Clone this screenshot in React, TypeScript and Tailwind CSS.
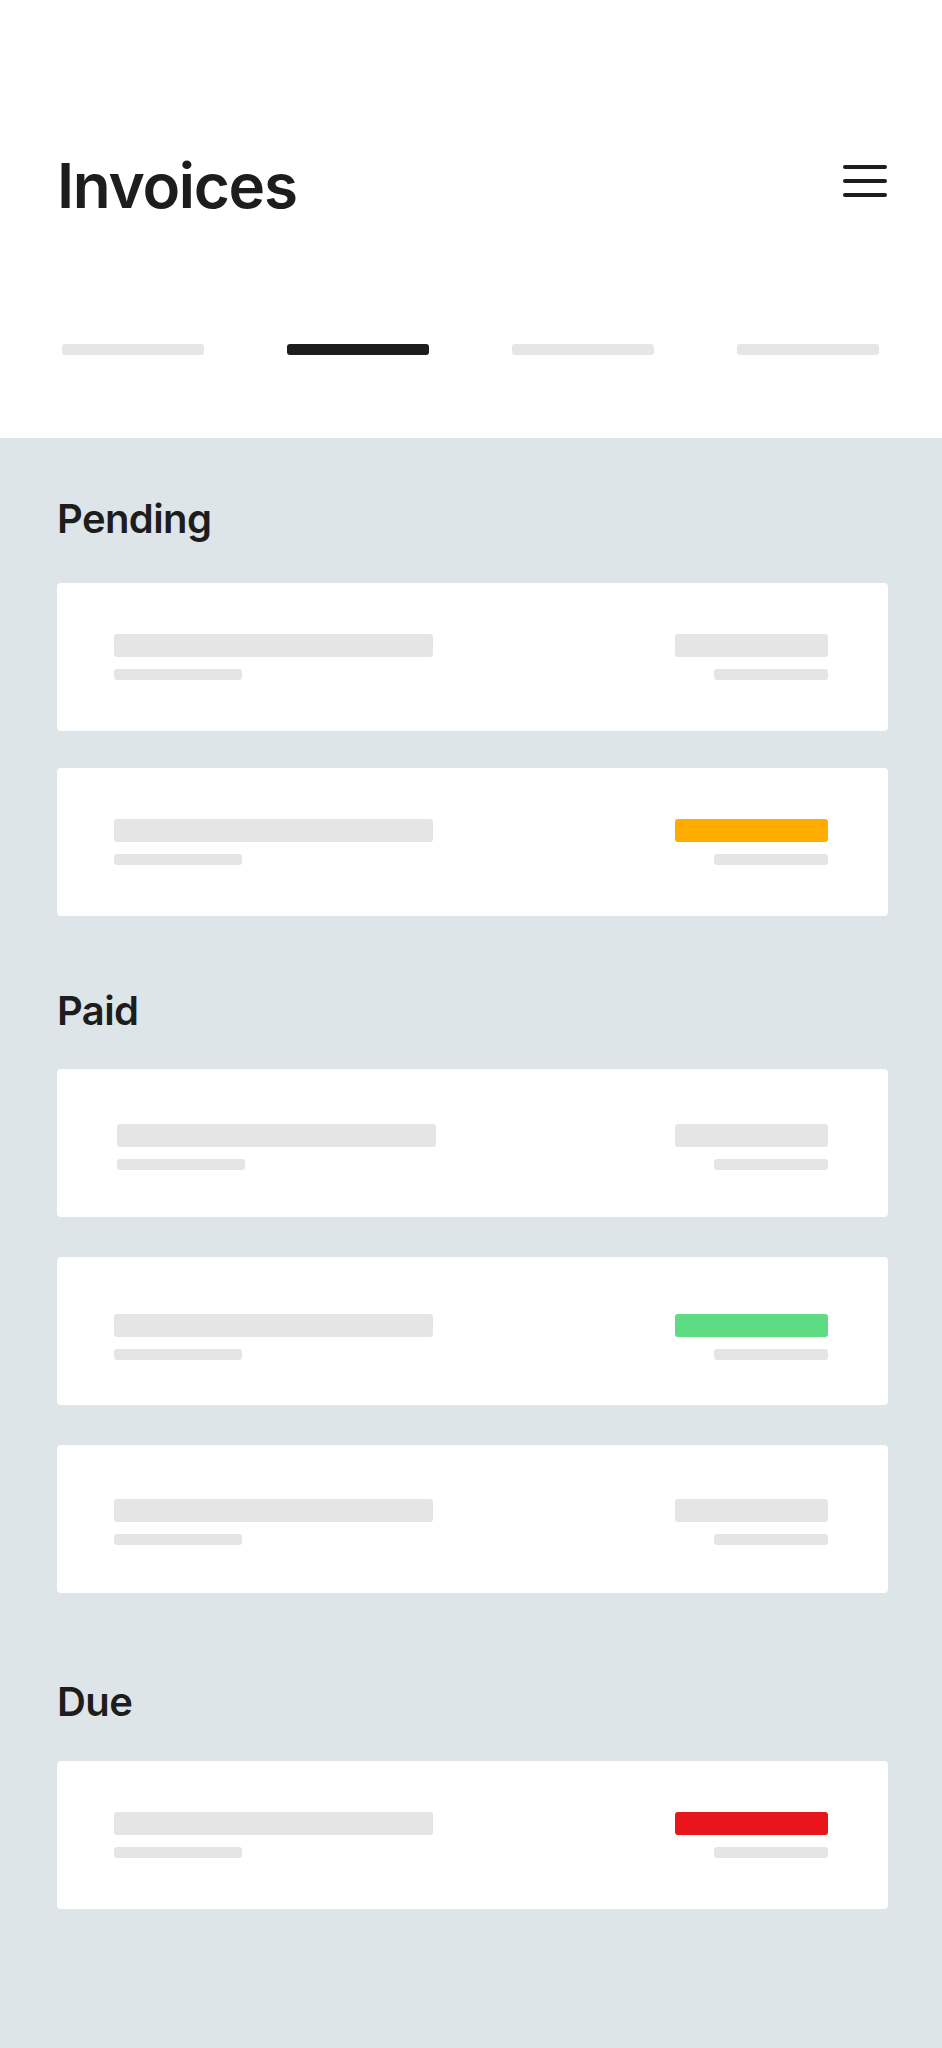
import React from "react";

type Row = {
  accent?: string;
  top: number;
  shiftX?: boolean;
};

type Section = {
  title: string;
  headingTop: string;
  cardTop: string;
  gap: string;
  rows: Row[];
};

const sections: Section[] = [
  {
    title: "Pending",
    headingTop: "mt-[61px]",
    cardTop: "mt-[44px]",
    gap: "gap-[37px]",
    rows: [{ top: 51 }, { top: 51, accent: "bg-[#ffab00]" }],
  },
  {
    title: "Paid",
    headingTop: "mt-[75px]",
    cardTop: "mt-[38px]",
    gap: "gap-[40px]",
    rows: [
      { top: 55, shiftX: true },
      { top: 57, accent: "bg-[#5edc83]" },
      { top: 54 },
    ],
  },
  {
    title: "Due",
    headingTop: "mt-[89px]",
    cardTop: "mt-[39px]",
    gap: "gap-[40px]",
    rows: [{ top: 51, accent: "bg-[#e8161c]" }],
  },
];

function Hamburger() {
  return (
    <button aria-label="Menu" className="mt-[10px] flex flex-col gap-[10px]">
      <span className="block h-[4px] w-[44px] rounded-full bg-[#1d1d1d]" />
      <span className="block h-[4px] w-[44px] rounded-full bg-[#1d1d1d]" />
      <span className="block h-[4px] w-[44px] rounded-full bg-[#1d1d1d]" />
    </button>
  );
}

function InvoiceCard({ row }: { row: Row }) {
  return (
    <div
      className="flex h-[148px] items-start justify-between rounded-[4px] bg-white pl-[57px] pr-[60px]"
      style={{ paddingTop: row.top }}
    >
      <div className={`flex flex-col gap-[12px] ${row.shiftX ? "ml-[3px]" : ""}`}>
        <div className="h-[23px] w-[319px] rounded-[3px] bg-[#e5e5e5]" />
        <div className="h-[11px] w-[128px] rounded-[3px] bg-[#e5e5e5]" />
      </div>
      <div className="flex flex-col items-end gap-[12px]">
        <div className={`h-[23px] w-[153px] rounded-[3px] ${row.accent ?? "bg-[#e5e5e5]"}`} />
        <div className="h-[11px] w-[114px] rounded-[3px] bg-[#e5e5e5]" />
      </div>
    </div>
  );
}

export default function App() {
  return (
    <div
      className="min-h-[2048px] w-full bg-[#dde5e8] text-[#1d1d1d]"
      style={{ fontFamily: "Inter, 'Noto Sans', sans-serif" }}
    >
      <header className="h-[438px] bg-white">
        <div className="flex items-start justify-between pl-[57px] pr-[55px] pt-[155px]">
          <h1 className="text-[62px] font-semibold leading-none tracking-[-1.3px]">Invoices</h1>
          <Hamburger />
        </div>
        <nav className="mt-[127px] flex gap-[83px] pl-[62px]">
          <span className="h-[11px] w-[142px] rounded-[3px] bg-[#e6e6e6]" />
          <span className="h-[11px] w-[142px] rounded-[3px] bg-[#1d1d1d]" />
          <span className="h-[11px] w-[142px] rounded-[3px] bg-[#e6e6e6]" />
          <span className="h-[11px] w-[142px] rounded-[3px] bg-[#e6e6e6]" />
        </nav>
      </header>

      <main className="pl-[57px] pr-[54px] pb-[140px]">
        {sections.map((s) => (
          <section key={s.title}>
            <h2 className={`${s.headingTop} text-[40px] font-semibold leading-none tracking-[-0.6px]`}>
              {s.title}
            </h2>
            <div className={`${s.cardTop} flex flex-col ${s.gap}`}>
              {s.rows.map((r, i) => (
                <InvoiceCard key={i} row={r} />
              ))}
            </div>
          </section>
        ))}
      </main>
    </div>
  );
}
